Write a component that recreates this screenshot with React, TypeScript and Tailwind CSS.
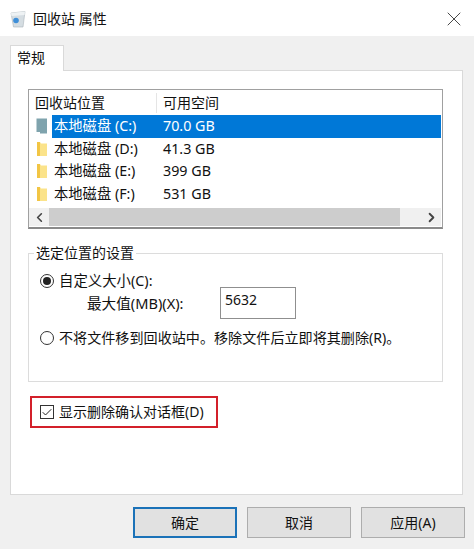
import { ChevronLeft, ChevronRight, X, Check } from "lucide-react";

const drives = [
  { name: "本地磁盘 (C:)", free: "70.0 GB", selected: true },
  { name: "本地磁盘 (D:)", free: "41.3 GB", selected: false },
  { name: "本地磁盘 (E:)", free: "399 GB", selected: false },
  { name: "本地磁盘 (F:)", free: "531 GB", selected: false },
];

function BinIcon() {
  return (
    <svg width="16" height="18" viewBox="0 0 16 18" className="shrink-0">
      <path d="M1 3 L15 1.5 L13 17 L3.5 17 Z" fill="#d5dde2" stroke="#aab4ba" strokeWidth="0.6" />
      <path d="M1 3 L15 1.5 L14.6 5 L1.5 6 Z" fill="#eef2f4" />
      <circle cx="6" cy="10.5" r="2.8" fill="#3f8fd8" />
    </svg>
  );
}

function DriveIcon() {
  return (
    <svg width="12" height="16" viewBox="0 0 12 16" className="shrink-0">
      <path d="M0.5 0.5 H11 V15.5 H4 V14 H0.5 Z" fill="#7fa3ad" />
    </svg>
  );
}

function FolderIcon() {
  return (
    <svg width="12" height="16" viewBox="0 0 12 16" className="shrink-0">
      <path d="M1 1 H4 L5 2.5 H11 V15 H1 Z" fill="#fbe38a" />
      <path d="M1 1 H4 V15 H1 Z" fill="#f2c544" />
    </svg>
  );
}

function Radio({ checked }: { checked: boolean }) {
  return (
    <span className="flex h-[14px] w-[14px] shrink-0 items-center justify-center rounded-full border border-[#333] bg-white">
      {checked && <span className="h-2 w-2 rounded-full bg-[#222]" />}
    </span>
  );
}

function DialogButton({ label, primary }: { label: string; primary?: boolean }) {
  return (
    <button
      className={`h-[31px] w-[104px] bg-[#e1e1e1] text-[14px] text-[#111] ${
        primary ? "border-2 border-[#1b72b8]" : "border border-[#adadad]"
      }`}
    >
      {label}
    </button>
  );
}

export default function App() {
  return (
    <div className="flex h-[549px] w-[474px] flex-col bg-[#f0f0f0] text-[14px] leading-[20px] text-[#111] [font-family:'Noto_Sans','Noto_Sans_CJK_SC',sans-serif]">
      <div className="flex h-[36px] shrink-0 items-center bg-white pl-[10px] pr-[8px] pt-[1px]">
        <BinIcon />
        <span className="ml-[7px] flex-1">回收站 属性</span>
        <X size={24} strokeWidth={0.9} className="text-[#333]" />
      </div>

      <div className="flex flex-1 flex-col pl-[10px] pr-[9px] pt-[9px]">
        <div className="flex">
          <div className="relative z-10 -mb-px flex h-[26px] w-[54px] items-start border border-b-0 border-[#d9d9d9] bg-white pl-[6px] pt-[2px]">
            常规
          </div>
        </div>

        <div className="flex h-[425px] w-[453px] flex-col border border-[#d9d9d9] bg-white pl-[17px] pr-[19px] pt-[18px]">
          <div className="flex h-[140px] shrink-0 flex-col border border-[#a0a0a0] border-b-2 border-b-[#8a8a8a]">
            <div className="flex h-[25px] shrink-0 items-center">
              <span className="w-[128px] border-r border-[#e5e5e5] pl-[6px]">回收站位置</span>
              <span className="pl-[6px]">可用空间</span>
            </div>
            <div className="flex flex-1 flex-col">
              {drives.map((d) => (
                <div key={d.name} className="flex h-[22.5px] items-center pl-[7px]">
                  {d.selected ? <DriveIcon /> : <FolderIcon />}
                  <div
                    className={`ml-[4px] mr-[1px] flex h-full flex-1 items-center pl-[2px] ${
                      d.selected ? "bg-[#0078d7] text-white" : ""
                    }`}
                  >
                    <span className="w-[109px] text-[14.3px]">{d.name}</span>
                    <span className="text-[14.3px]">{d.free}</span>
                  </div>
                </div>
              ))}
            </div>
            <div className="mb-[1px] mr-[1px] flex h-[18px] shrink-0 items-stretch bg-[#f0f0f0]">
              <span className="flex w-[20px] items-center justify-center">
                <ChevronLeft size={15} strokeWidth={2.6} className="text-[#444]" />
              </span>
              <span className="flex-1 bg-[#cdcdcd]" />
              <span className="flex w-[41px] items-center justify-end pr-[2px]">
                <ChevronRight size={15} strokeWidth={3} className="text-[#444]" />
              </span>
            </div>
          </div>

          <fieldset className="mt-[14px] h-[139px] shrink-0 border border-[#dcdcdc] pl-[11px] pr-[8px]">
            <legend className="-ml-[6px] px-[2px]">选定位置的设置</legend>
            <div className="mt-[8px] flex items-center gap-[5px]">
              <Radio checked />
              <span className="text-[14.4px]">自定义大小(C):</span>
            </div>
            <div className="mt-[-4px] flex items-center pl-[47px]">
              <span className="w-[133px] text-[14.6px]">最大值(MB)(X):</span>
              <div className="flex h-[32px] w-[76px] items-start border border-[#8f8f8f] pl-[4px] pt-[2px]">5632</div>
            </div>
            <div className="mt-[9px] flex items-center gap-[5px]">
              <Radio checked={false} />
              <span className="whitespace-nowrap text-[14.1px]">不将文件移到回收站中。移除文件后立即将其删除(R)。</span>
            </div>
          </fieldset>

          <div className="ml-[2px] mt-[14px] flex h-[32px] w-[188px] items-center gap-[5px] border-2 border-[#d3202a] pl-[8px]">
            <span className="flex h-[14px] w-[14px] shrink-0 items-center justify-center border border-[#333] bg-white">
              <Check size={13} strokeWidth={2} className="text-[#222]" />
            </span>
            <span>显示删除确认对话框(D)</span>
          </div>
        </div>

        <div className="mt-[12px] flex justify-end gap-[10px]">
          <DialogButton label="确定" primary />
          <DialogButton label="取消" />
          <DialogButton label="应用(A)" />
        </div>
      </div>
    </div>
  );
}
